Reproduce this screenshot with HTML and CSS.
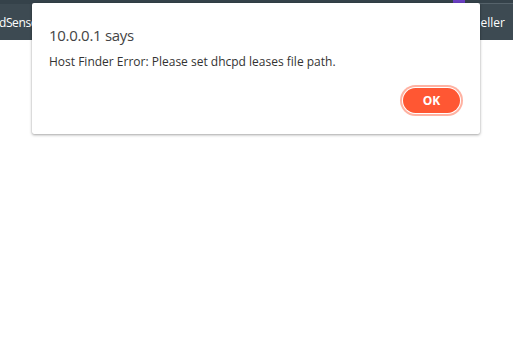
FILE: index.html
```html
<!DOCTYPE html>
<html lang="en">
<head>
  <meta charset="UTF-8" />
  <title>Host Finder</title>
  <link rel="stylesheet" href="styles.css">
</head>
<body>
  <div class="topbar">
    <div class="tabstrip">
      <span class="tab-edge"></span>
      <span class="ext-icon"></span>
    </div>
    <div class="bookmarks">
      <span class="bm bm-left">dSense</span>
      <span class="bm bm-right">eller</span>
    </div>
  </div>
  <div class="page"></div>

  <div class="dialog">
    <div class="dialog-title">10.0.0.1 says</div>
    <div class="dialog-msg">Host Finder Error: Please set dhcpd leases file path.</div>
    <div class="dialog-actions">
      <button class="btn-ok">OK</button>
    </div>
  </div>
</body>
</html>
```

FILE: styles.css
```css
body {
  margin: 0;
  background: #fff;
  font-family: 'Open Sans', 'Noto Sans', sans-serif;
  overflow: hidden;
}
.topbar {
  background: #3d4a52;
  height: 40px;
  display: flex;
  flex-direction: column;
}
.tabstrip {
  height: 4px;
  background: #35424a;
  position: relative;
}
.tab-edge {
  position: absolute;
  left: 440px;
  right: 0;
  bottom: 0;
  height: 1px;
  background: #56636b;
}
.ext-icon {
  position: absolute;
  left: 453px;
  top: 0;
  width: 12px;
  height: 3px;
  background: #6a3fc2;
}
.bookmarks {
  flex: 1;
  display: flex;
  justify-content: space-between;
  align-items: center;
  color: #fff;
  font-size: 12px;
  padding-top: 1px;
}
.bm-left {
  margin-left: -1px;
  letter-spacing: -0.4px;
}
.bm-right {
  margin-right: 8px;
}
.dialog {
  position: absolute;
  left: 32px;
  top: 3px;
  width: 448px;
  height: 131px;
  background: #fff;
  box-sizing: border-box;
  padding: 21px 17px 0 17px;
  box-shadow: 0 1px 3px rgba(0,0,0,0.35), 0 0 1px rgba(0,0,0,0.2);
  border-radius: 2px;
}
.dialog-title {
  font-size: 15px;
  color: #444;
  line-height: 22px;
  letter-spacing: -0.3px;
}
.dialog-msg {
  margin-top: 7px;
  font-size: 12px;
  color: #333;
  line-height: 17px;
}
.dialog-actions {
  display: flex;
  justify-content: flex-end;
  margin-top: 18px;
}
.btn-ok {
  width: 57px;
  height: 25px;
  margin-right: 3px;
  border: none;
  border-radius: 13px;
  background: #ff5733;
  color: #fff;
  font-family: inherit;
  font-weight: bold;
  font-size: 12px;
  box-shadow: 0 0 0 1px #fff, 0 0 0 3px #ffb2a2;
  cursor: pointer;
}
```
